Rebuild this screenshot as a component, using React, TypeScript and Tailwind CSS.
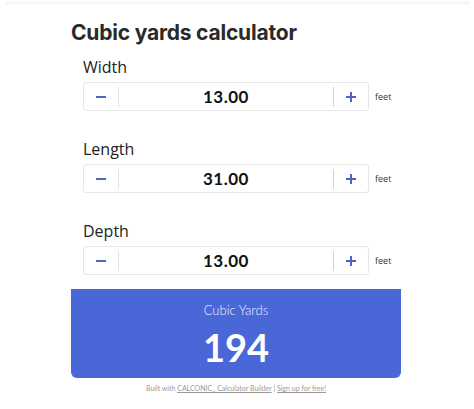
import React from "react";

function Field({ label, value }: { label: string; value: string }) {
  return (
    <div className="flex flex-col">
      <div className="text-[16px] leading-[24px] text-[#222] font-['Open_Sans',sans-serif]">{label}</div>
      <div className="mt-[3px] flex items-center">
        <div className="flex h-[29px] w-[286px] items-center rounded-[3px] border border-[#e6e6e6] bg-white">
          <div className="flex h-full w-[34px] items-center justify-center">
            <div className="h-[2px] w-[10px] bg-[#4a64c8]" />
          </div>
          <div className="h-[20px] w-[1px] bg-[#dde0ea]" />
          <div className="flex flex-1 items-center justify-center text-[17px] font-bold text-[#111] font-['Lato',sans-serif] tracking-[0.5px]">
            {value}
          </div>
          <div className="h-[20px] w-[1px] bg-[#c9d0ea]" />
          <div className="flex h-full w-[34px] items-center justify-center">
            <div className="relative h-[10px] w-[10px]">
              <div className="absolute left-0 top-[4px] h-[2px] w-[10px] bg-[#4a64c8]" />
              <div className="absolute left-[4px] top-0 h-[10px] w-[2px] bg-[#4a64c8]" />
            </div>
          </div>
        </div>
        <div className="ml-[6px] text-[9px] text-[#333] font-['Open_Sans',sans-serif]">feet</div>
      </div>
    </div>
  );
}

export default function App() {
  return (
    <div className="w-[474px] h-[409px] bg-white relative overflow-hidden">
      <div className="mx-[5px] mt-[1px] h-[4px] bg-[#f7f7f7]" />
      <div className="ml-[71px] w-[330px] flex flex-col">
        <div className="mt-[14px] text-[21px] leading-[28px] font-bold text-[#2a2a2a] font-['Inter',sans-serif] tracking-[-0.2px]">
          Cubic yards calculator
        </div>
        <div className="mt-[8px] pl-[12px] flex flex-col gap-[26px]">
          <Field label="Width" value="13.00" />
          <Field label="Length" value="31.00" />
          <Field label="Depth" value="13.00" />
        </div>
        <div className="mt-[14px] h-[89px] rounded-b-[6px] bg-[#4a67d8] flex flex-col items-center">
          <div className="mt-[12px] text-[13px] leading-[18px] font-light text-[#eef1ff] font-['Lato',sans-serif]">Cubic Yards</div>
          <div className="mt-[6px] text-[38px] leading-[44px] font-bold text-white font-['Lato',sans-serif]">194</div>
        </div>
        <div className="mt-[5px] text-center text-[7px] text-[#999] font-['Lato',sans-serif]">
          Built with <span className="underline">CALCONIC_ Calculator Builder</span> | <span className="underline">Sign up for free!</span>
        </div>
      </div>
    </div>
  );
}
